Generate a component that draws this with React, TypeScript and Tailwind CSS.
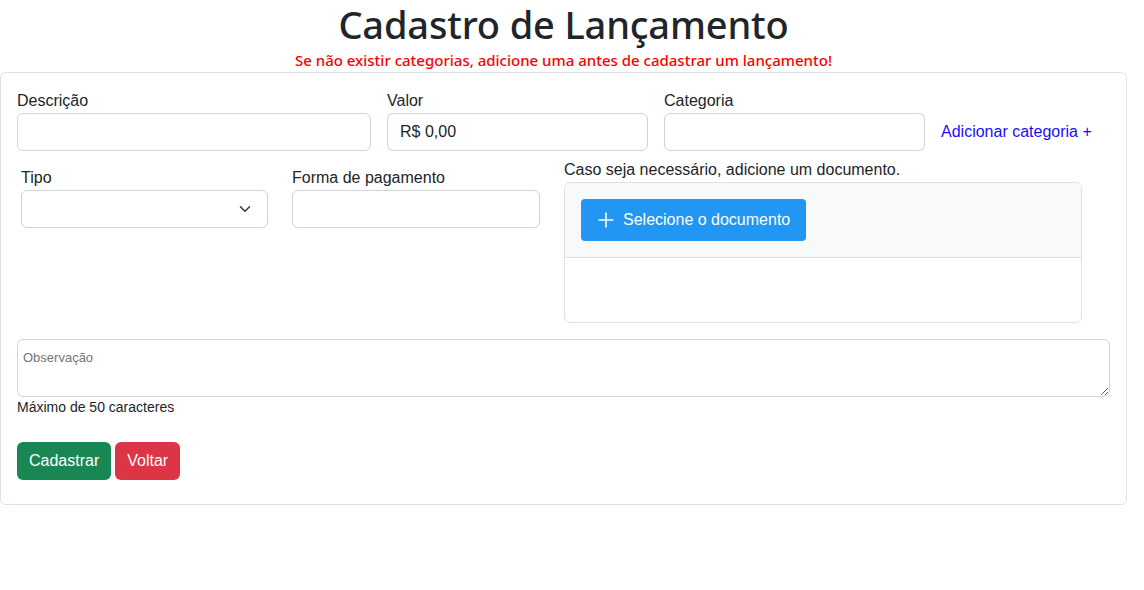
import React from 'react';

const font = { fontFamily: '"Liberation Sans", Arial, sans-serif' };
const heading = { fontFamily: '"Noto Sans", "Open Sans", sans-serif' };

function Label({ children }: { children: React.ReactNode }) {
  return <label className="block text-base leading-6 text-[#212529]">{children}</label>;
}

function TextInput({ value = '' }: { value?: string }) {
  return (
    <input
      readOnly
      value={value}
      className="block h-[38px] w-full rounded-md border border-[#ced4da] bg-white px-3 text-base text-[#212529] outline-none"
    />
  );
}

export default function App() {
  return (
    <div className="w-[1127px] bg-white text-[#212529]" style={font}>
      <h1 className="text-center text-[38px] font-medium leading-[48px] tracking-[-0.15px]" style={heading}>
        Cadastro de Lançamento
      </h1>
      <p className="text-center text-[15px] font-medium leading-6 text-[#ff0000]" style={heading}>
        Se não existir categorias, adicione uma antes de cadastrar um lançamento!
      </p>

      <div className="w-[1127px] rounded-md border border-[#dee2e6] px-4 pt-4 pb-6">
        {/* linha 1 */}
        <div className="flex items-end gap-4">
          <div className="w-[354px]">
            <Label>Descrição</Label>
            <TextInput />
          </div>
          <div className="w-[261px]">
            <Label>Valor</Label>
            <TextInput value="R$ 0,00" />
          </div>
          <div className="w-[261px]">
            <Label>Categoria</Label>
            <TextInput />
          </div>
          <a className="flex h-[38px] items-center text-base text-[#1a0dff]">Adicionar categoria +</a>
        </div>

        {/* linha 2 */}
        <div className="mt-[7px] flex items-start pl-1">
          <div className="mt-2 w-[247px]">
            <Label>Tipo</Label>
            <div className="relative flex h-[38px] w-full items-center rounded-md border border-[#ced4da] bg-white">
              <svg
                className="absolute right-[16px]"
                width="12"
                height="12"
                viewBox="0 0 16 16"
                fill="none"
                stroke="#343a40"
                strokeWidth="2"
                strokeLinecap="round"
                strokeLinejoin="round"
              >
                <path d="m2 5 6 6 6-6" />
              </svg>
            </div>
          </div>
          <div className="ml-6 mt-2 w-[248px]">
            <Label>Forma de pagamento</Label>
            <TextInput />
          </div>
          <div className="ml-6 w-[518px]">
            <Label>Caso seja necessário, adicione um documento.</Label>
            <div className="rounded-md border border-[#dee2e6]">
              <div className="rounded-t-md border-b border-[#dee2e6] bg-[#f8f9fa] p-4">
                <button className="flex h-[42px] items-center gap-2 rounded bg-[#2196f3] pl-4 pr-4 text-base text-white">
                  <svg width="18" height="18" viewBox="0 0 18 18" fill="none" stroke="white" strokeWidth="1.6">
                    <path d="M9 1.5v15M1.5 9h15" />
                  </svg>
                  Selecione o documento
                </button>
              </div>
              <div className="h-[64px]" />
            </div>
          </div>
        </div>

        {/* observação */}
        <textarea
          readOnly
          placeholder="Observação"
          className="mt-4 block h-[58px] w-full rounded-md border border-[#ced4da] px-[5px] py-[8px] text-[13px] text-[#212529] placeholder:text-[#757575] outline-none"
        />
        <p className="text-sm leading-[21px] text-[#212529]">Máximo de 50 caracteres</p>

        <div className="mt-6 flex gap-1">
          <button className="h-[38px] rounded-md bg-[#198754] px-3 text-base text-white">Cadastrar</button>
          <button className="h-[38px] rounded-md bg-[#dc3545] px-3 text-base text-white">Voltar</button>
        </div>
      </div>
    </div>
  );
}
